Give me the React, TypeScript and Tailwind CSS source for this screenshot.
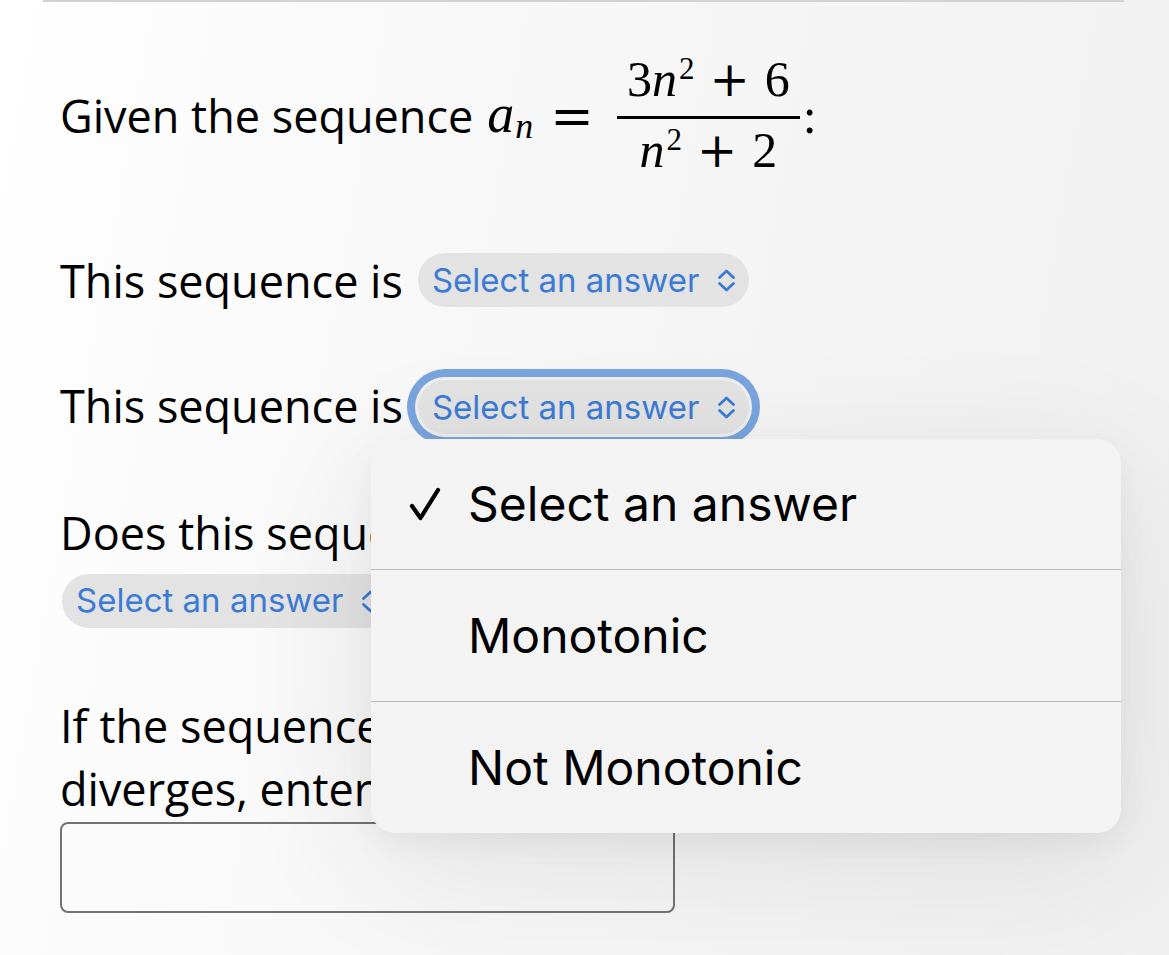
import React from 'react';

const UpDown: React.FC = () => (
    <svg width="21" height="25" viewBox="0 0 21 25" fill="none" className="shrink-0">
        <path d="M3.5 9.5 L10.5 3 L17.5 9.5" stroke="#3b7bd6" strokeWidth="2.8" strokeLinecap="round" strokeLinejoin="round" />
        <path d="M3.5 15.5 L10.5 22 L17.5 15.5" stroke="#3b7bd6" strokeWidth="2.8" strokeLinecap="round" strokeLinejoin="round" />
    </svg>
);

const Chip: React.FC<{ focused?: boolean }> = ({ focused }) => (
    <span
        className={
            focused
                ? 'inline-flex h-[54px] items-center gap-[17px] rounded-full bg-[#e3e3e3] pl-[14px] pr-[12px] text-[33px] text-[#3b7bd6] shadow-[0_0_0_3px_#efefef,0_0_0_11px_#79a4de]'
                : 'inline-flex h-[54px] items-center gap-[17px] rounded-full bg-[#e3e3e3] pl-[14px] pr-[12px] text-[33px] text-[#3b7bd6]'
        }
        style={{ fontFamily: 'Inter, "Noto Sans", sans-serif' }}
    >
        Select an answer
        <UpDown />
    </span>
);

const Check: React.FC = () => (
    <svg width="32" height="34" viewBox="0 0 32 34" fill="none">
        <path d="M3 19 L11.5 31 L29 3" stroke="#000" strokeWidth="4.2" strokeLinecap="round" strokeLinejoin="round" />
    </svg>
);

const serif = { fontFamily: '"Liberation Serif", "DejaVu Serif", serif' };
const op = { fontFamily: '"DejaVu Serif", "Liberation Serif", serif' };

export default function App() {
    const options = ['Select an answer', 'Monotonic', 'Not Monotonic'];

    return (
        <div
            className="relative min-h-screen w-full overflow-hidden bg-[linear-gradient(100deg,#ffffff_0%,#f8f8f8_35%,#f0f0f0_100%)] text-black"
            style={{ fontFamily: '"Open Sans", sans-serif' }}
        >
            <div className="ml-[43px] w-[1081px] border-t-2 border-[#d2d2d2] pl-[17px]">
                {/* Question stem */}
                <div className="mt-[60px] flex h-[110px] items-center text-[45px] leading-[63px]">
                    <span className="-mt-[4px]">Given the sequence</span>
                    <span className="flex items-center text-[50px]" style={serif}>
                        <span className="ml-[14px] -mt-[6px] text-[54px] italic leading-none">a</span>
                        <span className="mt-[18px] ml-[1px] text-[36px] italic leading-none">n</span>
                        <span className="ml-[17px] mr-[23px] -mt-[2px] text-[52px] leading-none" style={op}>=</span>
                        <span className="flex flex-col items-stretch">
                            <span className="flex h-[55px] items-end justify-center pb-[12px]">
                                <span className="leading-none">
                                    3<span className="italic">n</span>
                                    <sup className="-top-[17px] ml-[2px] text-[31px]">2</sup>
                                    <span className="mx-[15px] text-[48px]" style={op}>+</span>6
                                </span>
                            </span>
                            <span className="h-[3px] w-[183px] bg-black" />
                            <span className="flex h-[55px] items-start justify-center pt-[6px]">
                                <span className="leading-none">
                                    <span className="italic">n</span>
                                    <sup className="-top-[17px] ml-[2px] text-[31px]">2</sup>
                                    <span className="mx-[15px] text-[48px]" style={op}>+</span>2
                                </span>
                            </span>
                        </span>
                        <span className="ml-[3px] -mt-[2px] leading-none">:</span>
                    </span>
                </div>

                {/* First select */}
                <div className="mt-[81px] flex h-[54px] items-center gap-[15px] text-[45px] leading-[63px]">
                    <span>This sequence is</span>
                    <Chip />
                </div>

                {/* Second select, focused */}
                <div className="mt-[73px] flex h-[54px] items-center gap-[15px] text-[45px] leading-[63px]">
                    <span className="-mt-[4px]">This sequence is</span>
                    <Chip focused />
                </div>

                {/* Third select */}
                <div className="mt-[67px] text-[45px] leading-[63px]">Does this sequence converge or diverge?</div>
                <div className="mt-[10px] flex pl-[2px]">
                    <Chip />
                </div>

                {/* Limit input */}
                <div className="mt-[66px] max-w-[1000px] text-[45px] leading-[63px]">
                    If the sequence converges, enter the limit. If it diverges, enter DNE.
                </div>
                <div className="mt-[2px] h-[91px] w-[615px] rounded-[8px] border-2 border-[#727272] bg-transparent" />
                <div className="h-[40px]" />
            </div>

            {/* Native select popover */}
            <div
                className="absolute left-[371px] top-[439px] w-[750px] overflow-hidden rounded-[24px] bg-[#f3f3f3] shadow-[0_10px_30px_rgba(0,0,0,0.05),0_30px_140px_rgba(0,0,0,0.09)]"
                style={{ fontFamily: 'Inter, "Noto Sans", sans-serif' }}
            >
                {options.map((opt, i) => (
                    <div
                        key={opt}
                        className={
                            i === 0
                                ? 'flex h-[131px] items-center border-b border-[#bcbcbc] text-[48px]'
                                : i === 1
                                  ? 'flex h-[132px] items-center border-b border-[#bcbcbc] text-[48px]'
                                  : 'flex h-[131px] items-center text-[48px]'
                        }
                    >
                        <span className="flex w-[97px] justify-end pr-[27px]">{i === 0 && <Check />}</span>
                        <span>{opt}</span>
                    </div>
                ))}
            </div>
        </div>
    );
}
